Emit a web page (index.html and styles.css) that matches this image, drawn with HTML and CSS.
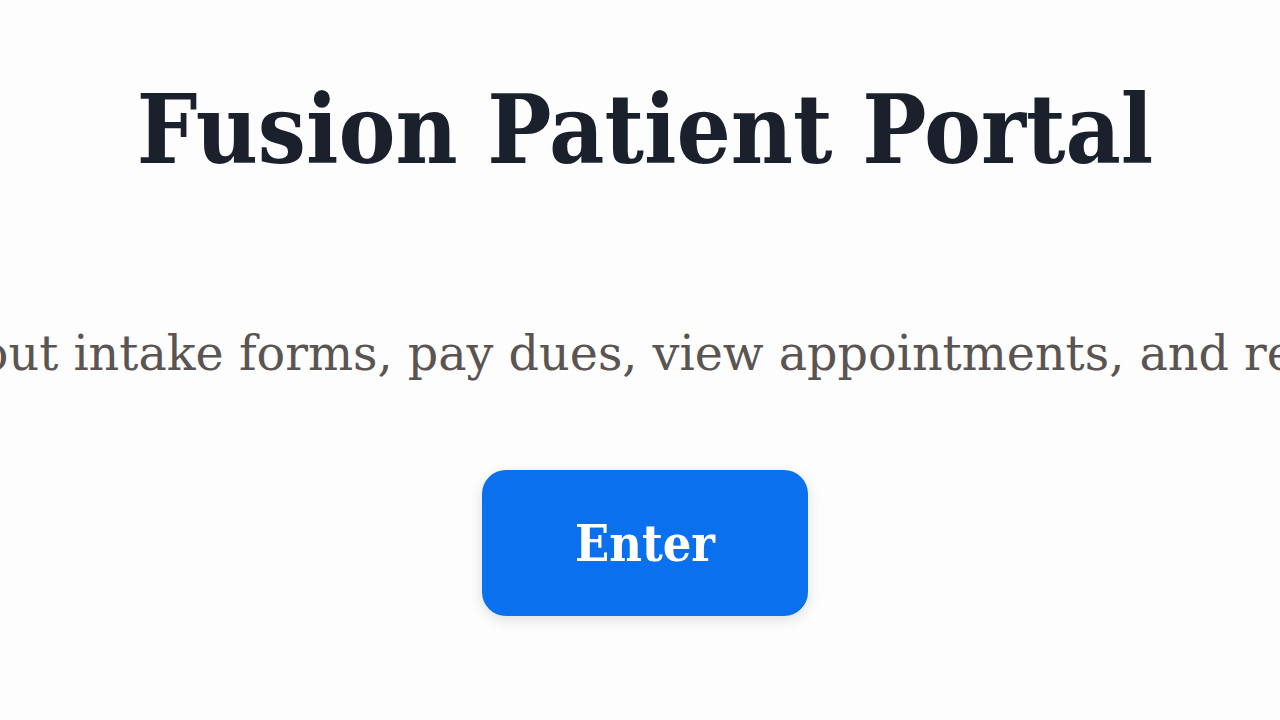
FILE: index.html
```html
<!DOCTYPE html>
<html lang="en">
<head>
    <meta charset="UTF-8">
    <title>Fusion Patient Portal</title>
    <link rel="stylesheet" href="styles.css">
</head>
<body>
<main class="landing">
    <h1 class="title">Fusion Patient Portal</h1>
    <div class="lead-wrap">
        <p class="lead">Fill out intake forms, pay dues, view appointments, and renew.</p>
    </div>
    <button class="enter">Enter</button>
</main>
</body>
</html>
```

FILE: styles.css
```css
html, body {
    margin: 0;
    padding: 0;
    height: 100%;
    overflow: hidden;
}

body {
    background: #fdfdfd;
    font-family: "DejaVu Serif", "Liberation Serif", serif;
    font-stretch: semi-condensed;
}

.landing {
    display: flex;
    flex-direction: column;
    align-items: center;
    padding: 70px 0 0 10px;
}

.title {
    margin: 0;
    font-size: 95px;
    font-weight: 700;
    line-height: 120px;
    color: #1a202c;
}

.lead-wrap {
    width: 100%;
    display: flex;
    justify-content: center;
    margin-top: 134px;
}

.lead {
    margin: 0;
    flex-shrink: 0;
    white-space: nowrap;
    font-size: 47.6px;
    font-stretch: normal;
    line-height: 60px;
    color: #5a5552;
}

.enter {
    margin-top: 86px;
    width: 326px;
    height: 146px;
    border: none;
    border-radius: 24px;
    background: #0b70ee;
    color: #fff;
    font-family: inherit;
    font-stretch: inherit;
    font-size: 50px;
    font-weight: 700;
    box-shadow: 0 4px 14px rgba(0, 0, 0, 0.12);
}
```
